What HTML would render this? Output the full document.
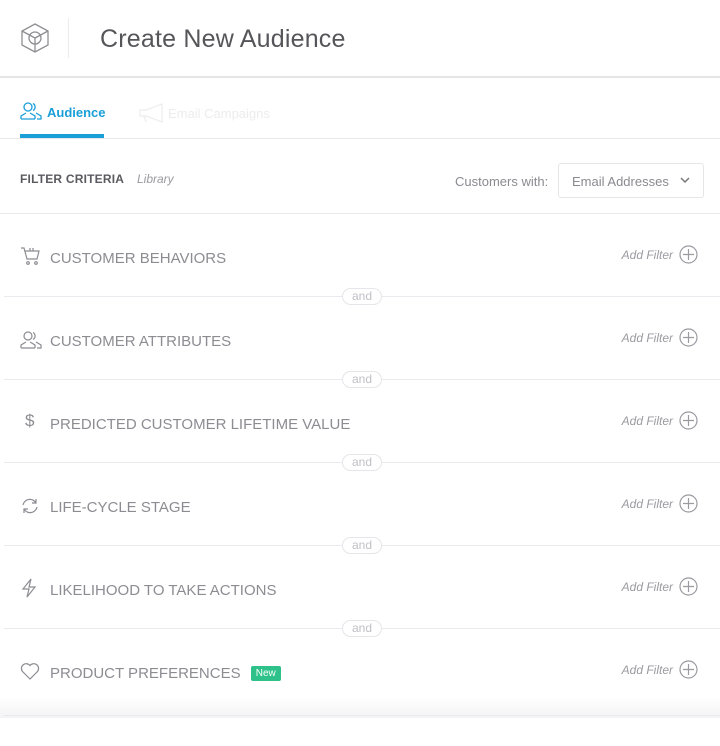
<!DOCTYPE html>
<html><head><meta charset="utf-8"><style>
*{margin:0;padding:0;box-sizing:border-box}
body{width:720px;height:718px;background:#fff;font-family:"Liberation Sans",sans-serif;position:relative;overflow:hidden}
.abs{position:absolute}
.hdr{top:0;left:0;width:720px;height:78px;border-bottom:2px solid #e6e6e8}
.title{left:100px;top:25px;font-size:25px;color:#55555a;font-weight:300;letter-spacing:0.2px}
.vsep{left:68px;top:18px;width:1px;height:40px;background:#ececec}
.tabs{top:80px;left:0;width:720px;height:59px;border-bottom:1px solid #e8e8ea}
.sec{left:0;width:720px;height:83px}
.st{position:absolute;left:50px;top:2px;font-size:15px;color:#8c8c92;letter-spacing:0}
.ic{position:absolute;left:20px}
.af{position:absolute;right:22px;font-size:12px;font-style:italic;color:#9a9aa0;display:flex;align-items:center;gap:6px}
.line{left:4px;width:716px;height:1px;background:#e9e9ee}
.and{width:40px;height:17px;border:1px solid #e6e6ea;border-radius:9px;background:#fff;color:#c0c0c5;font-size:12px;text-align:center;line-height:15px}
</style></head><body>
<div class="abs hdr"></div>
<svg class="abs" style="left:20px;top:22px" width="30" height="32" viewBox="0 0 30 32" fill="none" stroke="#8e8e92" stroke-width="1.3"><path d="M15 2L28 9v14l-13 7L2 23V9z"/><circle cx="15" cy="16" r="6"/><path d="M15 16V30M15 16L2 9M15 16l13-7"/></svg>
<div class="abs vsep"></div>
<div class="abs title">Create New Audience</div>
<div class="abs tabs"></div>
<svg class="abs" style="left:20px;top:102px" width="22" height="18" viewBox="0 0 22 18" fill="none" stroke="#1a9fd8" stroke-width="1.3"><circle cx="8" cy="5" r="4"/><path d="M1 17v-3l5-3M15 17v-3l-5-3M1 17h14"/><path d="M13 1.5a4 4 0 0 1 0 7M16 11l5 3v3h-4"/></svg>
<div class="abs" style="left:47px;top:105px;font-size:13px;color:#1a9fd8;font-weight:bold">Audience</div>
<div class="abs" style="left:20px;top:134px;width:84px;height:4px;background:#1a9fd8"></div>
<svg class="abs" style="left:138px;top:102px" width="26" height="22" viewBox="0 0 26 22" fill="none" stroke="#ececee" stroke-width="1.2"><path d="M2 8h6l16-6v18L8 14H2zM6 14l2 6"/></svg>
<div class="abs" style="left:168px;top:106px;font-size:13px;color:#ececee">Email Campaigns</div>
<div class="abs" style="left:20px;top:172px;font-size:12px;color:#5a5a60;font-weight:bold;letter-spacing:0.2px">FILTER CRITERIA</div>
<div class="abs" style="left:137px;top:172px;font-size:12px;color:#9a9aa0;font-style:italic">Library</div>
<div class="abs" style="left:455px;top:174px;font-size:13px;color:#8a8a90">Customers with:</div>
<div class="abs" style="left:558px;top:163px;width:146px;height:35px;border:1px solid #e6e6e8;border-radius:3px"></div>
<div class="abs" style="left:572px;top:174px;font-size:13px;color:#8a8a90">Email Addresses</div>
<svg class="abs" style="left:680px;top:177px" width="10" height="7" viewBox="0 0 10 7" fill="none" stroke="#777" stroke-width="1.5"><path d="M1 1l4 4 4-4"/></svg>
<div class="abs line" style="left:0;width:720px;top:213px"></div>

<div class="abs sec" style="top:248px">
<svg class="ic" style="top:-2px" width="20" height="20" viewBox="0 0 20 20" fill="none" stroke="#8c8c92" stroke-width="1.2"><path d="M1 2h3l3 11h10l2-8H5"/><circle cx="8" cy="17" r="1.3"/><circle cx="16" cy="17" r="1.3"/><path d="M10 5v-3M13 5v-3"/></svg>
<div class="st">CUSTOMER BEHAVIORS</div></div>
<div class="abs sec" style="top:331px">
<svg class="ic" style="top:0px" width="22" height="18" viewBox="0 0 22 18" fill="none" stroke="#8c8c92" stroke-width="1.2"><circle cx="8" cy="5" r="4"/><path d="M1 17v-3l5-3M15 17v-3l-5-3M1 17h14"/><path d="M13 1.5a4 4 0 0 1 0 7M16 11l5 3v3h-4"/></svg>
<div class="st">CUSTOMER ATTRIBUTES</div></div>
<div class="abs sec" style="top:414px">
<div class="ic" style="top:-3px;left:25px;font-size:17px;color:#8c8c92">$</div>
<div class="st">PREDICTED CUSTOMER LIFETIME VALUE</div></div>
<div class="abs sec" style="top:497px">
<svg class="ic" style="top:0px" width="20" height="18" viewBox="0 0 20 18" fill="none" stroke="#8c8c92" stroke-width="1.2"><path d="M3 8a7 7 0 0 1 13-2M17 10a7 7 0 0 1-13 2M16 2v4h-4M4 16v-4h4"/></svg>
<div class="st">LIFE-CYCLE STAGE</div></div>
<div class="abs sec" style="top:580px">
<svg class="ic" style="top:-2px" width="18" height="20" viewBox="0 0 18 20" fill="none" stroke="#8c8c92" stroke-width="1.2"><path d="M11 1L3 11h6l-2 8 8-10H9z"/></svg>
<div class="st">LIKELIHOOD TO TAKE ACTIONS</div></div>
<div class="abs sec" style="top:663px">
<svg class="ic" style="top:-1px" width="20" height="18" viewBox="0 0 20 18" fill="none" stroke="#8c8c92" stroke-width="1.2"><path d="M10 17L2.5 9.5A4.5 4.5 0 0 1 10 3.5a4.5 4.5 0 0 1 7.5 6z"/></svg>
<div class="st">PRODUCT PREFERENCES <span style="display:inline-block;margin-left:6px;background:#2ec28a;color:#fff;font-size:10px;padding:2px 5px;border-radius:2px;vertical-align:2px">New</span></div></div>

<div class="abs af" style="top:245px">Add Filter <svg width="19" height="19" viewBox="0 0 19 19" fill="none" stroke="#9a9aa0" stroke-width="1.2"><circle cx="9.5" cy="9.5" r="8.5"/><path d="M9.5 4v11M4 9.5h11"/></svg></div>
<div class="abs af" style="top:328px">Add Filter <svg width="19" height="19" viewBox="0 0 19 19" fill="none" stroke="#9a9aa0" stroke-width="1.2"><circle cx="9.5" cy="9.5" r="8.5"/><path d="M9.5 4v11M4 9.5h11"/></svg></div>
<div class="abs af" style="top:411px">Add Filter <svg width="19" height="19" viewBox="0 0 19 19" fill="none" stroke="#9a9aa0" stroke-width="1.2"><circle cx="9.5" cy="9.5" r="8.5"/><path d="M9.5 4v11M4 9.5h11"/></svg></div>
<div class="abs af" style="top:494px">Add Filter <svg width="19" height="19" viewBox="0 0 19 19" fill="none" stroke="#9a9aa0" stroke-width="1.2"><circle cx="9.5" cy="9.5" r="8.5"/><path d="M9.5 4v11M4 9.5h11"/></svg></div>
<div class="abs af" style="top:577px">Add Filter <svg width="19" height="19" viewBox="0 0 19 19" fill="none" stroke="#9a9aa0" stroke-width="1.2"><circle cx="9.5" cy="9.5" r="8.5"/><path d="M9.5 4v11M4 9.5h11"/></svg></div>
<div class="abs af" style="top:660px">Add Filter <svg width="19" height="19" viewBox="0 0 19 19" fill="none" stroke="#9a9aa0" stroke-width="1.2"><circle cx="9.5" cy="9.5" r="8.5"/><path d="M9.5 4v11M4 9.5h11"/></svg></div>

<div class="abs line" style="top:296px"></div><div class="abs and" style="left:342px;top:288px">and</div>
<div class="abs line" style="top:379px"></div><div class="abs and" style="left:342px;top:371px">and</div>
<div class="abs line" style="top:462px"></div><div class="abs and" style="left:342px;top:454px">and</div>
<div class="abs line" style="top:545px"></div><div class="abs and" style="left:342px;top:537px">and</div>
<div class="abs line" style="top:628px"></div><div class="abs and" style="left:342px;top:620px">and</div>
<div class="abs" style="left:0;top:697px;width:720px;height:21px;background:linear-gradient(#fff,#f3f3f5)"></div>
<div class="abs line" style="top:715px"></div>
</body></html>
